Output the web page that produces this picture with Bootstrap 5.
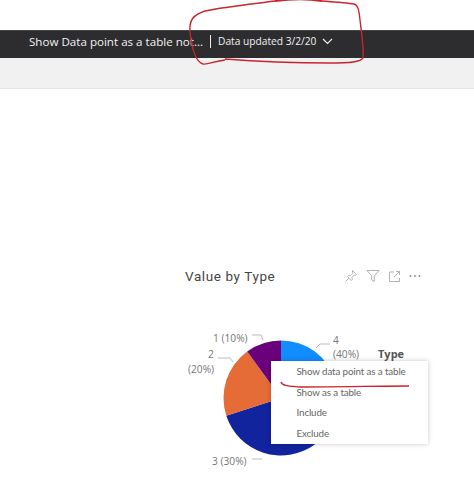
<!DOCTYPE html>
<html lang="en">
<head>
<meta charset="utf-8">
<title>Value by Type</title>
<link rel="stylesheet" href="https://cdn.jsdelivr.net/npm/bootstrap@5.3.0/dist/css/bootstrap.min.css">
<style>
html,body{width:474px;height:486px;overflow:hidden;background:#fff;font-family:"Open Sans","Noto Sans",sans-serif}
.page-frame{position:relative;width:474px;height:486px;overflow:hidden}
.top-gap{height:30px}
.report-bar{height:28px;background:#2d2c2e;color:#f3f2f1;padding-left:29px;padding-bottom:6px;border-top:1px solid #444}
.report-name{font-size:11.6px;white-space:nowrap}
.report-sep{width:1px;height:13px;background:#eee;margin:0 7px 0 7px}
.report-date{font-size:10.2px;white-space:nowrap}
.report-caret{margin-left:6px}
.action-strip{height:31px;background:#f2f1f1;border-bottom:1px solid #e4e4e4}
.visual-area{height:397px}
.visual-head{margin-left:185px;width:236px;padding-top:178px;height:198px}
.visual-title{font-family:Roboto,"Open Sans",sans-serif;font-weight:400;font-size:13.5px;letter-spacing:.6px;color:#444;line-height:18px}
.visual-icons{gap:8px;margin-top:2px}
.pie-canvas{position:absolute;left:0;top:0;width:474px;height:486px;pointer-events:none}
.pie-canvas text{font-family:"Open Sans",sans-serif;font-size:10.2px;fill:#777}
.pie-canvas text.legend-title{font-weight:700;fill:#555;font-size:11px}
.point-menu{position:absolute;left:271px;top:361px;width:157px;height:83px;background:#fff;box-shadow:0 0 5px rgba(0,0,0,.22);padding:0;border:0;border-radius:0}
.point-menu .point-item{height:20.5px;line-height:20.5px;padding:0 0 0 25.5px;font-family:Lato,"Open Sans",sans-serif;font-size:9.8px;letter-spacing:-.13px;color:#666;background:none;border:0;white-space:nowrap}
.ink{position:absolute;left:0;top:0;width:474px;height:486px;pointer-events:none}
</style>
</head>
<body>
<div class="page-frame">
  <div class="top-gap"></div>
  <div class="report-bar d-flex align-items-center">
    <span class="report-name">Show Data point as a table not...</span>
    <span class="report-sep"></span>
    <span class="report-date">Data updated 3/2/20</span>
    <svg class="report-caret" width="11" height="7" viewBox="0 0 11 7"><path d="M1 1l4.500 4.500L10 1" fill="none" stroke="#f3f2f1" stroke-width="1.1"/></svg>
  </div>
  <div class="action-strip"></div>
  <div class="visual-area">
    <div class="visual-head d-flex justify-content-between align-items-start">
      <span class="visual-title">Value by Type</span>
      <div class="visual-icons d-flex align-items-center">
        <svg width="14" height="14" viewBox="0 0 14 14"><path d="M8.500 1.500l4 4-1 .8-1.200-.2-2.300 2.300.2 2.200-.9.9-2-2-2-2 .9-.9 2.200.2 2.300-2.300-.2-1.200zM5 9l-3.500 3.500" fill="none" stroke="#aaa" stroke-width=".9"/></svg>
        <svg width="14" height="14" viewBox="0 0 14 14"><path d="M1 1.500h12L8.300 7v5.500l-2.600-1.600V7z" fill="none" stroke="#aaa" stroke-width=".9"/></svg>
        <svg width="13" height="13" viewBox="0 0 13 13"><path d="M6 2H1.500v9.500H11.500V8M8 1.500h3.500V5M11.500 1.500L6 7" fill="none" stroke="#aaa" stroke-width=".9"/></svg>
        <svg width="12" height="14" viewBox="0 0 12 14"><circle cx="1.500" cy="7" r=".9" fill="#888"/><circle cx="6" cy="7" r=".9" fill="#888"/><circle cx="10.500" cy="7" r=".9" fill="#888"/></svg>
      </div>
    </div>
  </div>

  <svg class="pie-canvas" viewBox="0 0 474 486">
    <path d="M281 398V340.500A57.500 57.500 0 0 1 314.800 444.500Z" fill="#118dff"/>
    <path d="M281 398L314.800 444.500A57.500 57.500 0 0 1 226.300 415.800Z" fill="#12239e"/>
    <path d="M281 398L226.300 415.800A57.500 57.500 0 0 1 247.200 351.500Z" fill="#e66c37"/>
    <path d="M281 398L247.200 351.500A57.500 57.500 0 0 1 281 340.500Z" fill="#6b007b"/>
    <path d="M252 335h9l2 5M218 358h12l3 4M316 348l4-4h10M252 459h10" fill="none" stroke="#aaa" stroke-width=".8"/>
    <text x="213" y="342">1 (10%)</text>
    <text x="208" y="358">2</text>
    <text x="188" y="373">(20%)</text>
    <text x="212" y="465">3 (30%)</text>
    <text x="333" y="344">4</text>
    <text x="333" y="358">(40%)</text>
    <text class="legend-title" x="378" y="358">Type</text>
  </svg>

  <div class="point-menu d-flex flex-column">
    <div class="point-item">Show data point as a table</div>
    <div class="point-item">Show as a table</div>
    <div class="point-item">Include</div>
    <div class="point-item">Exclude</div>
  </div>

  <svg class="ink" viewBox="0 0 474 486">
    <path d="M225 60C214 61 208 65 203 64C196 62 192 50 190 32C189 20 193 15 205 11C228 6 262 3 275 1M322 1C335 2 348 3 354 4C358 5 359 10 360 20C362 36 364 50 363 58C361 62 350 63 330 63C290 63 250 61 225 59" fill="none" stroke="#c8262c" stroke-width="1.400"/>
    <path d="M275 1C290 -1 310 -1 322 1" fill="none" stroke="#c8262c" stroke-width="2"/>
    <path d="M281 382C282 386 290 386 300 387C340 387 380 386 409 386" fill="none" stroke="#cf2027" stroke-width="1.300"/>
  </svg>
</div>
<script src="https://cdn.jsdelivr.net/npm/bootstrap@5.3.0/dist/js/bootstrap.bundle.min.js"></script>
</body>
</html>
